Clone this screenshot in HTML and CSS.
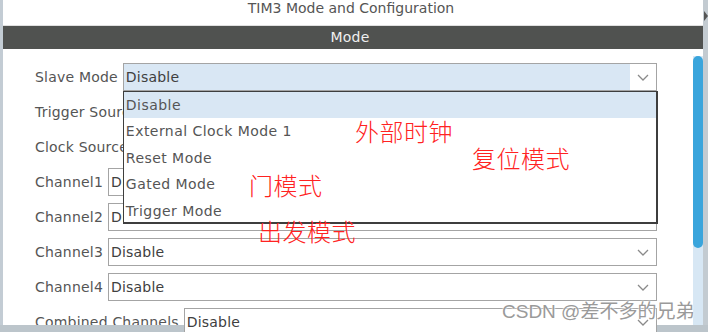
FILE: index.html
```html
<!DOCTYPE html>
<html>
<head>
<meta charset="utf-8">
<link rel="stylesheet" href="styles.css">
</head>
<body>
<div class="app">
  <div class="top">
    <div class="lstripe"></div>
    <div class="main">
      <div class="title">TIM3 Mode and Configuration</div>
      <div class="header">Mode</div>
      <div class="body">
        <div class="form">
          <div class="row">
            <span class="label">Slave Mode</span>
            <div class="select active">
              <span class="value">Disable</span>
              <span class="arrow"><svg width="12" height="7" viewBox="0 0 12 7"><path d="M1 1 L6 6 L11 1" fill="none" stroke="#8a8a8a" stroke-width="1.3"/></svg></span>
              <div class="dropdown">
                <div class="item sel">Disable</div>
                <div class="item">External Clock Mode 1</div>
                <div class="item">Reset Mode</div>
                <div class="item">Gated Mode</div>
                <div class="item">Trigger Mode</div>
              </div>
            </div>
          </div>
          <div class="row">
            <span class="label">Trigger Source</span>
            <div class="select"><span class="value">Disable</span></div>
          </div>
          <div class="row">
            <span class="label">Clock Source</span>
            <div class="select"><span class="value">Disable</span></div>
          </div>
          <div class="row">
            <span class="label">Channel1</span>
            <div class="select"><span class="value">Disable</span></div>
          </div>
          <div class="row">
            <span class="label">Channel2</span>
            <div class="select"><span class="value">Disable</span></div>
          </div>
          <div class="row">
            <span class="label">Channel3</span>
            <div class="select"><span class="value">Disable</span>
              <span class="arrow"><svg width="12" height="7" viewBox="0 0 12 7"><path d="M1 1 L6 6 L11 1" fill="none" stroke="#8a8a8a" stroke-width="1.3"/></svg></span></div>
          </div>
          <div class="row">
            <span class="label">Channel4</span>
            <div class="select"><span class="value">Disable</span>
              <span class="arrow"><svg width="12" height="7" viewBox="0 0 12 7"><path d="M1 1 L6 6 L11 1" fill="none" stroke="#8a8a8a" stroke-width="1.3"/></svg></span></div>
          </div>
          <div class="row">
            <span class="label">Combined Channels</span>
            <div class="select"><span class="value">Disable</span>
              <span class="arrow"><svg width="12" height="7" viewBox="0 0 12 7"><path d="M1 1 L6 6 L11 1" fill="none" stroke="#8a8a8a" stroke-width="1.3"/></svg></span></div>
          </div>
        </div>
        <div class="scroll"><div class="thumb"></div></div>
      </div>
    </div>
    <div class="rstripe"><div class="tri"></div></div>
  </div>
  <div class="bottom"></div>
  <div class="note n1">外部时钟</div>
  <div class="note n2">复位模式</div>
  <div class="note n3">门模式</div>
  <div class="note n4">出发模式</div>
  <div class="watermark">CSDN @差不多的兄弟</div>
</div>
</body>
</html>
```
FILE: styles.css
```css
html, body {
  margin: 0;
  padding: 0;
  background: #ffffff;
}
.app {
  position: relative;
  width: 708px;
  height: 332px;
  display: grid;
  grid-template-rows: 325px 7px;
  overflow: hidden;
  font-family: "DejaVu Sans", sans-serif;
  font-size: 14px;
  letter-spacing: 0.2px;
}
.top {
  display: flex;
  min-height: 0;
}
.lstripe {
  width: 3px;
  background: #c3ccd4;
}
.rstripe {
  position: relative;
  width: 5px;
  background: #c3cbd1;
}
.tri {
  position: absolute;
  left: 1px;
  top: 11px;
  width: 0;
  height: 0;
  border-top: 5px solid transparent;
  border-bottom: 5px solid transparent;
  border-left: 4px solid #555;
}
.bottom {
  background: #bcc5cb;
}
.main {
  flex: 1;
  display: flex;
  flex-direction: column;
  min-width: 0;
  min-height: 0;
}
.title {
  height: 26px;
  line-height: 17px;
  text-align: center;
  color: #555555;
  padding-right: 4px;
  box-sizing: border-box;
  border-bottom: 1px solid #e0e0e0;
  letter-spacing: 0;
}
.header {
  height: 23px;
  line-height: 23px;
  background: #505250;
  color: #efefef;
  text-align: center;
  padding-right: 6px;
}
.body {
  flex: 1;
  display: flex;
  min-height: 0;
}
.form {
  flex: 1;
  display: flex;
  flex-direction: column;
  gap: 7px;
  padding: 14px 36px 0 32px;
  min-width: 0;
}
.row {
  display: flex;
  align-items: center;
  gap: 5px;
  height: 28px;
  flex: none;
}
.label {
  color: #555555;
  white-space: nowrap;
}
.select {
  position: relative;
  flex: 1;
  height: 28px;
  box-sizing: border-box;
  border: 1px solid #a4a4a4;
  background: #ffffff;
  display: flex;
  align-items: center;
}
.select.active {
  background: #d9e7f4;
}
.value {
  flex: 1;
  padding-left: 2px;
  color: #404040;
}
.arrow {
  width: 26px;
  height: 100%;
  display: flex;
  align-items: center;
  justify-content: center;
}
.select.active .arrow {
  background: #ffffff;
}
.dropdown {
  position: absolute;
  left: -1px;
  right: -2px;
  top: 27px;
  height: 133px;
  box-sizing: border-box;
  border: 1px solid #3e3e3e;
  border-right-width: 2px;
  border-bottom-width: 2px;
  background: #ffffff;
  z-index: 5;
}
.item {
  height: 26.4px;
  line-height: 26px;
  padding-left: 2px;
  color: #555555;
  letter-spacing: 0.45px;
}
.item.sel {
  background: #d9e7f4;
}
.scroll {
  width: 10px;
  padding-top: 7px;
  background: #d7e7f4;
  background-clip: content-box;
}
.thumb {
  height: 192px;
  background: #3aa5dc;
  border-radius: 5px;
}
.note {
  position: absolute;
  color: #ff2222;
  font-family: "Noto Sans CJK SC", sans-serif;
  font-weight: 300;
  font-size: 24px;
  line-height: 24px;
  letter-spacing: 0.5px;
  z-index: 10;
}
.n1 { left: 355px; top: 119px; }
.n2 { left: 472px; top: 146px; }
.n3 { left: 249px; top: 173px; }
.n4 { left: 258px; top: 219px; }
.watermark {
  position: absolute;
  left: 502px;
  top: 301px;
  color: #9a9a9a;
  font-family: "Liberation Sans", "Noto Sans CJK SC", sans-serif;
  font-size: 19px;
  line-height: 22px;
  letter-spacing: 0;
  text-shadow: 0 0 2px #ffffff, 0 0 2px #ffffff;
  z-index: 10;
}
```
